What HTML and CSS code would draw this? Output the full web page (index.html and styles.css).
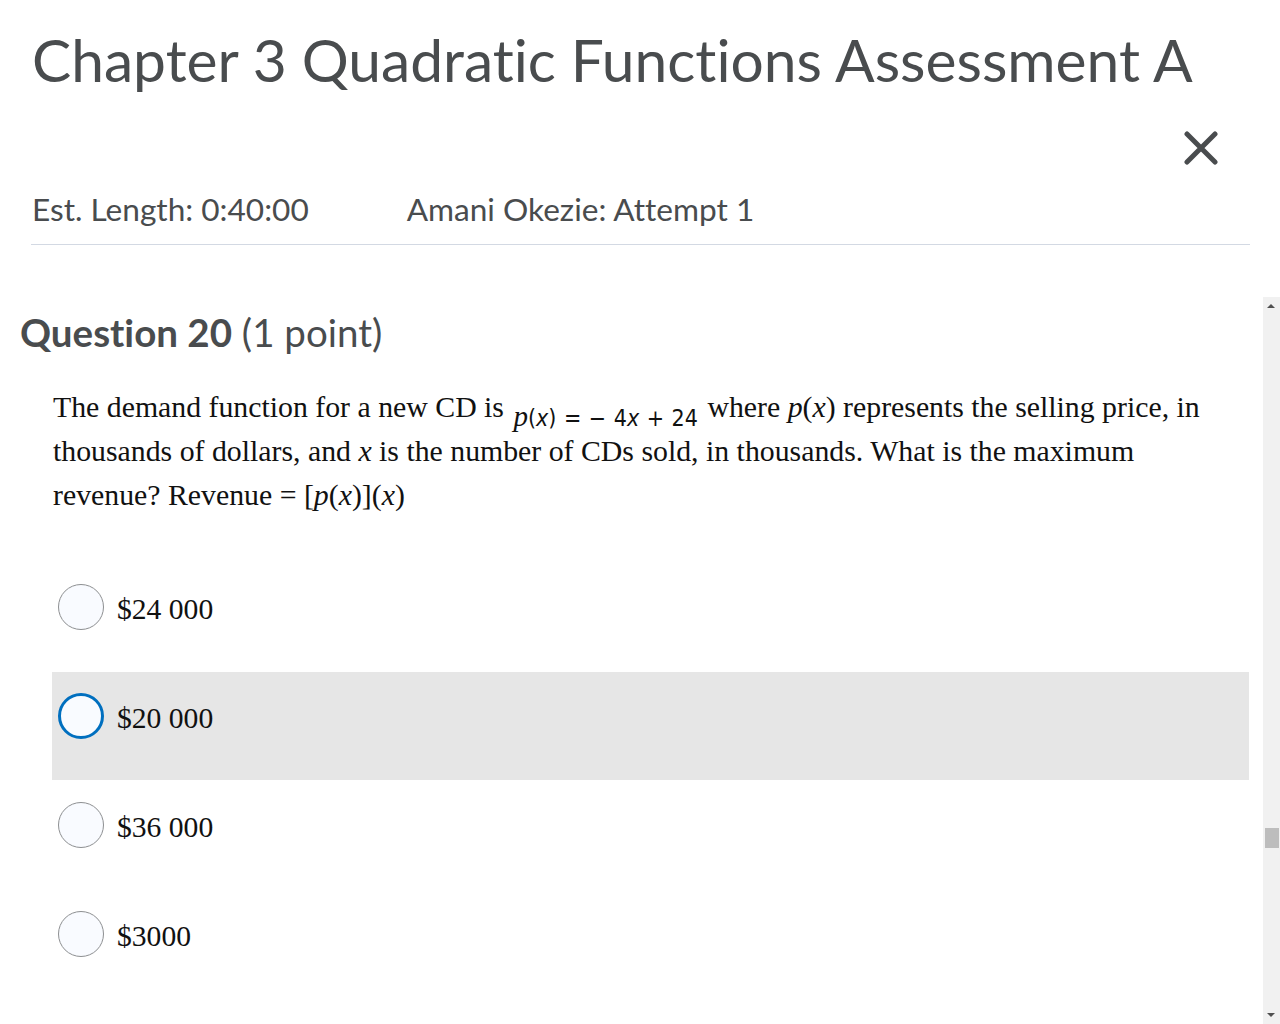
FILE: index.html
```html
<!DOCTYPE html>
<html lang="en">
<head>
<meta charset="utf-8">
<title>Chapter 3 Quadratic Functions Assessment A</title>
<link rel="stylesheet" href="styles.css">
</head>
<body>
<div class="page">
  <header class="top">
    <h1 class="title">Chapter 3 Quadratic Functions Assessment A</h1>
    <div class="close-row">
      <button class="close" aria-label="Close">
        <svg width="34" height="34" viewBox="0 0 34 34"><path d="M3 3 L31 31 M31 3 L3 31" stroke="#494c4e" stroke-width="5" stroke-linecap="round" fill="none"/></svg>
      </button>
    </div>
    <div class="meta">
      <span class="meta-len">Est. Length: 0:40:00</span>
      <span class="meta-att">Amani Okezie: Attempt 1</span>
    </div>
  </header>
  <main class="pane">
    <div class="pane-content">
      <h2 class="qhead"><strong>Question 20</strong> (1 point)</h2>
      <p class="qtext">The demand function for a new CD is <span class="eq"><i class="eq-p">p</i>(<i>x</i>) = − 4<i>x</i> + 24</span> where <i>p</i>(<i>x</i>) represents the selling price, in thousands of dollars, and <i>x</i> is the number of CDs sold, in thousands. What is the maximum revenue? Revenue = [<i>p</i>(<i>x</i>)](<i>x</i>)</p>
      <ul class="options">
        <li class="opt"><span class="radio"></span><span class="opt-text">$24 000</span></li>
        <li class="opt opt-hover"><span class="radio radio-focus"></span><span class="opt-text">$20 000</span></li>
        <li class="opt"><span class="radio"></span><span class="opt-text">$36 000</span></li>
        <li class="opt"><span class="radio"></span><span class="opt-text">$3000</span></li>
      </ul>
    </div>
    <div class="scrollbar">
      <span class="sb-up"></span>
      <span class="sb-thumb"></span>
      <span class="sb-down"></span>
    </div>
  </main>
</div>
</body>
</html>
```

FILE: styles.css
```css
html, body {
  margin: 0;
  padding: 0;
  background: #ffffff;
}
.page {
  height: 1024px;
  overflow: hidden;
  display: flex;
  flex-direction: column;
  font-variant-ligatures: none;
}
.top {
  padding: 0 31px 0 32px;
  font-family: Lato, "Liberation Sans", sans-serif;
  color: #494c4e;
}
.title {
  margin: 0;
  padding-top: 24px;
  font-size: 58.7px;
  line-height: 72px;
  font-weight: 400;
  white-space: nowrap;
}
.close-row {
  display: flex;
  justify-content: flex-end;
  margin-top: 35px;
  padding-right: 31px;
}
.close {
  border: 0;
  background: none;
  padding: 0;
  width: 34px;
  height: 34px;
  display: block;
}
.close svg { display: block; }
.meta {
  margin: 26px -1px 0 -1px;
  padding: 0 0 17px 1px;
  border-bottom: 1px solid #d3d9e3;
  display: flex;
  gap: 98px;
  font-size: 31.6px;
  line-height: 36px;
}
.pane {
  flex: 1;
  margin-top: 52px;
  position: relative;
  overflow: hidden;
}
.pane-content {
  padding-right: 17px;
}
.qhead {
  margin: 11px 0 0 20px;
  font-family: Lato, "Liberation Sans", sans-serif;
  font-size: 38.5px;
  line-height: 48px;
  font-weight: 400;
  color: #494c4e;
}
.qhead strong { font-weight: 700; }
.qtext {
  margin: 29px 33px 0 53px;
  font-family: "Liberation Serif", "Times New Roman", serif;
  font-size: 29.8px;
  line-height: 44px;
  color: #111111;
}
.eq {
  font-family: "DejaVu Sans Condensed", "DejaVu Sans", sans-serif;
  font-size: 23px;
  line-height: 0;
  word-spacing: 1px;
  position: relative;
  top: 9px;
  margin: 0 2px;
}
.eq-p {
  font-family: "Liberation Serif", serif;
  font-size: 29px;
}
.options {
  list-style: none;
  margin: 46px 14px 0 52px;
  padding: 0;
}
.opt {
  display: flex;
  align-items: center;
  height: 108px;
  padding: 0 0 20px 6px;
  box-sizing: border-box;
  margin-bottom: 1px;
  gap: 13px;
}
.opt-hover {
  background: #e6e6e6;
}
.radio {
  width: 46px;
  height: 46px;
  border-radius: 50%;
  border: 1px solid #8d8f91;
  background: #f9fbff;
  box-sizing: border-box;
  flex: none;
}
.radio-focus {
  border: 3px solid #006fbf;
}
.opt-text {
  font-family: "Liberation Serif", "Times New Roman", serif;
  font-size: 29.6px;
  line-height: 32px;
  color: #111111;
  padding-top: 4px;
}
.scrollbar {
  position: absolute;
  top: 0;
  right: 0;
  bottom: 0;
  width: 17px;
  background: #f1f1f1;
}
.sb-up, .sb-down {
  position: absolute;
  left: 4px;
  width: 0;
  height: 0;
  border-left: 4px solid transparent;
  border-right: 4px solid transparent;
}
.sb-up {
  top: 7px;
  border-bottom: 4px solid #505050;
}
.sb-down {
  bottom: 7px;
  border-top: 4px solid #505050;
}
.sb-thumb {
  position: absolute;
  left: 2px;
  width: 14px;
  top: 531px;
  height: 20px;
  background: #bdbdbd;
}
```
